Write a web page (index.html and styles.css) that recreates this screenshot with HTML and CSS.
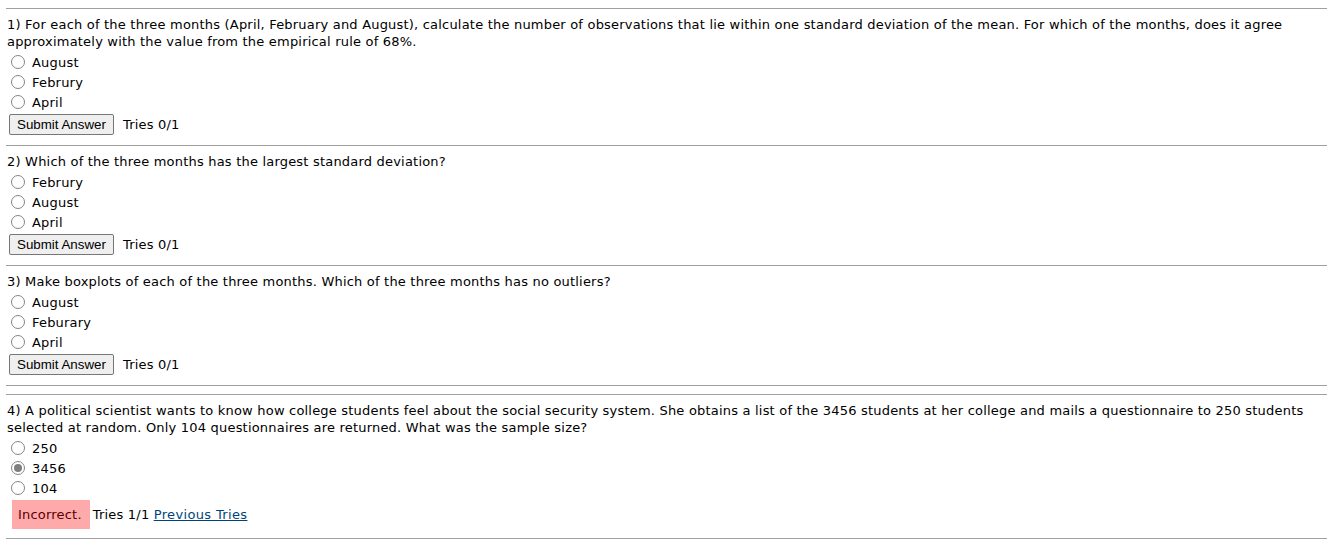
FILE: index.html
```html
<!DOCTYPE html>
<html lang="en">
<head>
    <meta charset="UTF-8">
    <title>Problem Set</title>
    <link rel="stylesheet" href="styles.css">
</head>
<body>
    <hr class="sep">

    <div class="problem">
        <p class="question">1) For each of the three months (April, February and August), calculate the number of observations that lie within one standard deviation of the mean. For which of the months, does it agree approximately with the value from the empirical rule of 68%.</p>
        <div class="choices">
            <label class="choice"><input type="radio" name="q1"> August</label>
            <label class="choice"><input type="radio" name="q1"> Februry</label>
            <label class="choice"><input type="radio" name="q1"> April</label>
        </div>
        <div class="submit-row">
            <button class="submit-btn">Submit Answer</button>
            <span class="tries">Tries 0/1</span>
        </div>
    </div>
    <hr class="sep">

    <div class="problem">
        <p class="question">2) Which of the three months has the largest standard deviation?</p>
        <div class="choices">
            <label class="choice"><input type="radio" name="q2"> Februry</label>
            <label class="choice"><input type="radio" name="q2"> August</label>
            <label class="choice"><input type="radio" name="q2"> April</label>
        </div>
        <div class="submit-row">
            <button class="submit-btn">Submit Answer</button>
            <span class="tries">Tries 0/1</span>
        </div>
    </div>
    <hr class="sep">

    <div class="problem">
        <p class="question">3) Make boxplots of each of the three months. Which of the three months has no outliers?</p>
        <div class="choices">
            <label class="choice"><input type="radio" name="q3"> August</label>
            <label class="choice"><input type="radio" name="q3"> Feburary</label>
            <label class="choice"><input type="radio" name="q3"> April</label>
        </div>
        <div class="submit-row">
            <button class="submit-btn">Submit Answer</button>
            <span class="tries">Tries 0/1</span>
        </div>
    </div>
    <hr class="sep">
    <hr class="sep sep-gap">

    <div class="problem done">
        <p class="question">4) A political scientist wants to know how college students feel about the social security system. She obtains a list of the 3456 students at her college and mails a questionnaire to 250 students selected at random. Only 104 questionnaires are returned. What was the sample size?</p>
        <div class="choices">
            <label class="choice"><input type="radio" name="q4" disabled> 250</label>
            <label class="choice"><input type="radio" name="q4" disabled checked> 3456</label>
            <label class="choice"><input type="radio" name="q4" disabled> 104</label>
        </div>
        <div class="result-row">
            <span class="incorrect">Incorrect.</span>
            <span class="tries">Tries 1/1 <a href="#">Previous Tries</a></span>
        </div>
    </div>
    <hr class="sep">
</body>
</html>
```

FILE: styles.css
```css
body {
    margin: 0;
    padding: 8px 0 0 6px;
    background-color: #fff;
    color: #000;
    font-family: "DejaVu Sans", Verdana, sans-serif;
    font-size: 13px;
    line-height: 17px;
    letter-spacing: 0.2px;
}
.sep {
    margin: 0;
    height: 0;
    border: 0;
    border-top: 1px solid #a0a0a0;
}
.sep-gap {
    margin-top: 8px;
}
.problem {
    padding: 7px 0 10px 1px;
}
.problem.done {
    padding-bottom: 9px;
}
.question {
    margin: 0 0 2px 0;
}
.choices {
    display: flex;
    flex-direction: column;
}
.choice {
    display: flex;
    align-items: center;
    height: 20px;
    padding-left: 4px;
}
.choice input {
    appearance: none;
    -webkit-appearance: none;
    width: 14px;
    height: 14px;
    margin: 0 7px 0 0;
    border: 1px solid #858585;
    border-radius: 50%;
    background-color: #fff;
    display: flex;
    align-items: center;
    justify-content: center;
}
.choice input:checked::after {
    content: "";
    width: 8px;
    height: 8px;
    border-radius: 50%;
    background-color: #7f7f7f;
}
.submit-row {
    display: flex;
    align-items: center;
    margin-top: 2px;
    padding-left: 2px;
    height: 21px;
}
.submit-btn {
    font-family: "Liberation Sans", Arial, sans-serif;
    font-size: 13.33px;
    letter-spacing: normal;
    height: 21px;
    padding: 0 7px;
    background-color: #efefef;
    color: #000;
    border: 1px solid #767676;
    border-radius: 2px;
    margin-right: 9px;
}
.result-row {
    display: flex;
    align-items: center;
    margin-top: 2px;
    padding-left: 5px;
}
.incorrect {
    background-color: #ffaaaa;
    color: #5a0000;
    padding: 6px 8px 6px 6px;
    margin-right: 3px;
}
.tries a {
    color: #00457a;
    letter-spacing: 0.35px;
}
```
